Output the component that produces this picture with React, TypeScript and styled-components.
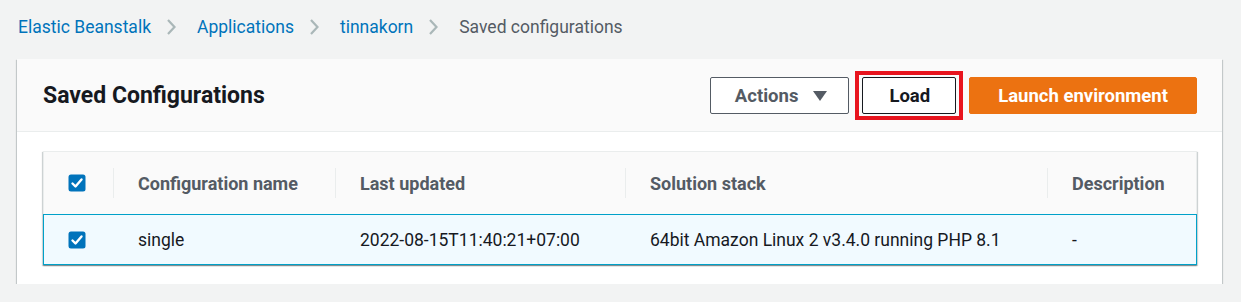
import React from 'react'
import styled, { createGlobalStyle } from 'styled-components'

const GlobalStyle = createGlobalStyle`
  body {
    margin: 0;
    background: #f2f3f3;
    font-family: Roboto, 'Liberation Sans', sans-serif;
    color: #16191f;
  }
`

const columns = [
  { label: 'Configuration name', width: '222px' },
  { label: 'Last updated', width: '290px' },
  { label: 'Solution stack', width: '422px' },
  { label: 'Description', width: '1fr' },
]

const rows = [
  {
    name: 'single',
    updated: '2022-08-15T11:40:21+07:00',
    stack: '64bit Amazon Linux 2 v3.4.0 running PHP 8.1',
    description: '-',
  },
]

const Checkbox: React.FC = () => (
  <svg width='18' height='18' viewBox='0 0 18 18'>
    <rect x='0.5' y='0.5' width='17' height='17' rx='2.5' fill='#0073bb' />
    <polyline
      points='4.5,9.5 7.5,12.5 13.5,5.5'
      fill='none'
      stroke='#fff'
      strokeWidth='2.4'
      strokeLinecap='round'
      strokeLinejoin='round'
    />
  </svg>
)

const Chevron: React.FC = () => (
  <svg width='10' height='18' viewBox='0 0 10 18'>
    <polyline points='2,2 8.5,9 2,16' fill='none' stroke='#aab7b8' strokeWidth='2.2' />
  </svg>
)

const Caret: React.FC = () => (
  <svg width='14' height='10' viewBox='0 0 14 10'>
    <polygon points='0,0 14,0 7,10' fill='#545b64' />
  </svg>
)

const App: React.FC = () => {
  return (
    <>
      <GlobalStyle />
      <Page>
        <Breadcrumbs>
          <Crumb>Elastic Beanstalk</Crumb>
          <Separator><Chevron /></Separator>
          <Crumb>Applications</Crumb>
          <Separator><Chevron /></Separator>
          <Crumb>tinnakorn</Crumb>
          <Separator><Chevron /></Separator>
          <Crumb current>Saved configurations</Crumb>
        </Breadcrumbs>
        <Card>
          <CardHeader>
            <Title>Saved Configurations</Title>
            <Actions>
              <Button withIcon>
                Actions
                <Caret />
              </Button>
              <Button highlighted dark>Load</Button>
              <Button primary>Launch environment</Button>
            </Actions>
          </CardHeader>
          <CardBody>
            <Table>
              <HeaderRow>
                <HeadCell>
                  <Checkbox />
                </HeadCell>
                {columns.map((c) => (
                  <HeadCell key={c.label}>{c.label}</HeadCell>
                ))}
              </HeaderRow>
              {rows.map((r) => (
                <Row key={r.name} selected>
                  <Cell>
                    <Checkbox />
                  </Cell>
                  <Cell>{r.name}</Cell>
                  <Cell>{r.updated}</Cell>
                  <Cell>{r.stack}</Cell>
                  <Cell>{r.description}</Cell>
                </Row>
              ))}
            </Table>
          </CardBody>
        </Card>
      </Page>
    </>
  )
}

const gridColumns = `69px ${columns.map((c) => c.width).join(' ')}`

export const Page = styled.div`
  padding: 0 19px 0 17px;
`
export const Breadcrumbs = styled.nav`
  display: flex;
  align-items: center;
  height: 52px;
  padding: 1px 0 0 1px;
  font-size: 17.5px;
`
export const Crumb = styled.span<{ current?: boolean }>`
  color: ${(p) => (p.current ? '#545b64' : '#0073bb')};
`
export const Separator = styled.span`
  display: flex;
  margin: 0 21px 0 15px;
`
export const Card = styled.section`
  margin-top: 6px;
  background: #fff;
  box-shadow: 0 1px 1px 0 rgba(0, 28, 36, 0.3), 1px 1px 1px 0 rgba(0, 28, 36, 0.15),
    -1px 1px 1px 0 rgba(0, 28, 36, 0.15);
`
export const CardHeader = styled.header`
  display: flex;
  align-items: center;
  justify-content: space-between;
  height: 72px;
  padding: 0 25px 0 26px;
  background: #fafafa;
  border-bottom: 1px solid #eaeded;
`
export const Title = styled.h2`
  margin: 0;
  font-size: 23px;
  font-weight: 700;
  color: #16191f;
`
export const Actions = styled.div`
  display: flex;
  gap: 13px;
  padding-top: 1px;
`
export const Button = styled.button<{
  primary?: boolean
  dark?: boolean
  highlighted?: boolean
  withIcon?: boolean
}>`
  position: relative;
  display: flex;
  align-items: center;
  gap: 15px;
  height: 37px;
  padding: 0 ${(p) => (p.withIcon ? '21px' : p.primary ? '28px' : '25px')} 0
    ${(p) => (p.withIcon ? '24px' : p.primary ? '28px' : '26px')};
  border-radius: 2px;
  border: 1px solid ${(p) => (p.primary ? '#ec7211' : p.dark ? '#16191f' : '#545b64')};
  background: ${(p) => (p.primary ? '#ec7211' : '#fff')};
  color: ${(p) => (p.primary ? '#fff' : p.dark ? '#16191f' : '#545b64')};
  font-family: inherit;
  font-size: 18.5px;
  font-weight: 700;

  /* red annotation frame drawn over the screenshot */
  &::after {
    content: '';
    display: ${(p) => (p.highlighted ? 'block' : 'none')};
    position: absolute;
    top: -7px;
    bottom: -7px;
    left: -8px;
    right: -8px;
    border: 4px solid #e8141e;
    pointer-events: none;
  }
`
export const CardBody = styled.div`
  padding: 19px 25px 19px 26px;
`
export const Table = styled.div`
  box-shadow: 0 1px 1px 0 rgba(0, 28, 36, 0.3), 1px 1px 1px 0 rgba(0, 28, 36, 0.15),
    -1px 1px 1px 0 rgba(0, 28, 36, 0.15);
`
export const HeaderRow = styled.div`
  display: grid;
  grid-template-columns: ${gridColumns};
  height: 62px;
  background: #fafafa;
  border: 1px solid #eaeded;
  border-bottom: none;
`
export const HeadCell = styled.div`
  display: flex;
  align-items: center;
  padding-left: 24px;
  margin: 16px 0 16px;
  font-size: 18px;
  font-weight: 700;
  color: #545b64;
  & + & {
    border-left: 1px solid #eaeded;
  }
`
export const Row = styled.div<{ selected?: boolean }>`
  display: grid;
  grid-template-columns: ${gridColumns};
  height: 51px;
  box-sizing: border-box;
  background: ${(p) => (p.selected ? '#f1faff' : '#fff')};
  border: 1px solid ${(p) => (p.selected ? '#00a1c9' : '#eaeded')};
`
export const Cell = styled.div`
  display: flex;
  align-items: center;
  padding-left: 24px;
  font-size: 17.5px;
  color: #16191f;
  & + & {
    padding-left: 25px;
  }
`

export default App
